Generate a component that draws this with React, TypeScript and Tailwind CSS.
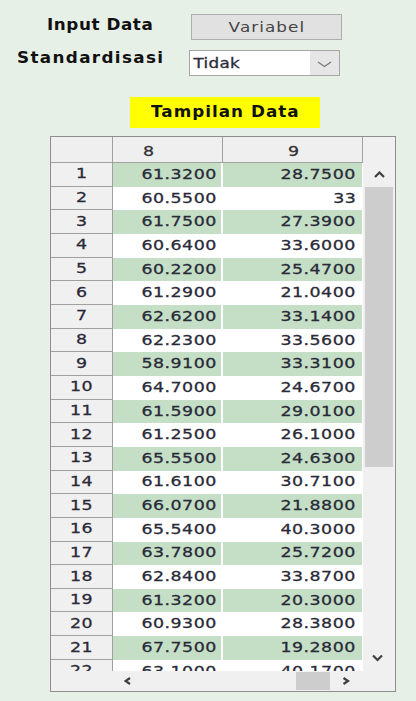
import React from 'react';

const rows: [string, string][] = [
  ['61.3200', '28.7500'],
  ['60.5500', '33'],
  ['61.7500', '27.3900'],
  ['60.6400', '33.6000'],
  ['60.2200', '25.4700'],
  ['61.2900', '21.0400'],
  ['62.6200', '33.1400'],
  ['62.2300', '33.5600'],
  ['58.9100', '33.3100'],
  ['64.7000', '24.6700'],
  ['61.5900', '29.0100'],
  ['61.2500', '26.1000'],
  ['65.5500', '24.6300'],
  ['61.6100', '30.7100'],
  ['66.0700', '21.8800'],
  ['65.5400', '40.3000'],
  ['63.7800', '25.7200'],
  ['62.8400', '33.8700'],
  ['61.3200', '20.3000'],
  ['60.9300', '28.3800'],
  ['67.7500', '19.2800'],
  ['63.1000', '40.1700'],
];

type Dir = 'up' | 'down' | 'left' | 'right';

// small scrollbar arrows
function Arrow({ dir }: { dir: Dir }) {
  const pts: Record<Dir, string> = {
    up: '1,6 5.5,1.5 10,6',
    down: '1,1.5 5.5,6 10,1.5',
    left: '6,1 1.5,4 6,7',
    right: '1.5,1 6,4 1.5,7',
  };
  const vertical = dir === 'up' || dir === 'down';
  return (
    <svg
      width={vertical ? 11 : 8}
      height={8}
      viewBox={vertical ? '0 0 11 8' : '0 0 8 8'}
      className="block"
    >
      <polyline points={pts[dir]} fill="none" stroke="#404040" strokeWidth="2.2" />
    </svg>
  );
}

export default function App() {
  return (
    <div className="w-[416px] h-[701px] overflow-hidden bg-[#e7f0e7] font-['DejaVu_Sans',sans-serif] text-[#222]">
      {/* Input Data */}
      <div className="flex items-start pt-[14px]">
        <div className="w-[191px] pl-[47px] pt-[2px] text-[15px] leading-[18px] font-bold text-[#111]">
          <span className="inline-block origin-left scale-x-[1.12] tracking-[0.5px]">Input Data</span>
        </div>
        <div className="w-[151px] h-[26px] border border-[#adadad] bg-[#e1e1e1] flex items-center justify-center text-[14px] text-[#444]">
          <span className="inline-block scale-x-[1.2] tracking-[0.9px]">Variabel</span>
        </div>
      </div>

      {/* Standardisasi */}
      <div className="flex items-start mt-[10px]">
        <div className="w-[189px] pl-[17px] -mt-[1px] text-[15px] leading-[18px] font-bold text-[#111]">
          <span className="inline-block origin-left scale-x-[1.12] tracking-[1.2px]">Standardisasi</span>
        </div>
        <div className="w-[151px] h-[26px] border border-[#a6a6a6] bg-white flex items-center">
          <span className="pl-[3px] inline-block origin-left scale-x-[1.2] tracking-[0.2px] text-[14px] text-[#2b2b3b] [-webkit-text-stroke:0.3px_#2b2b3b]">
            Tidak
          </span>
          <div className="ml-auto w-[29px] h-full bg-[#e6e6e6] flex items-center justify-center">
            <svg width="15" height="7" viewBox="0 0 15 7" className="block mt-[2px]">
              <polyline points="1,1 7.5,5.5 14,1" fill="none" stroke="#7a7a7a" strokeWidth="1.4" />
            </svg>
          </div>
        </div>
      </div>

      {/* Tampilan Data */}
      <div className="ml-[130px] mt-[21px] w-[190px] h-[31px] bg-[#ffff00] flex items-center justify-center text-[15px] font-bold text-[#111]">
        <span className="inline-block scale-x-[1.12] tracking-[0.9px]">Tampilan Data</span>
      </div>

      {/* table */}
      <div className="ml-[50px] mt-[8px] w-[346px] h-[556px] border border-[#8e8e8e] flex flex-col">
        <div className="flex h-[534px]">
          <div className="w-[312px] flex flex-col">
            <div className="flex h-[26px] border-b border-[#a0a0a0] bg-[#efefef] text-[14.5px] text-[#333] [-webkit-text-stroke:0.3px_#333]">
              <div className="w-[62px] border-r border-[#a0a0a0]" />
              <div className="w-[110px] border-r border-[#a0a0a0] pl-[31px] pt-[4px]">
                <span className="inline-block scale-x-[1.2]">8</span>
              </div>
              <div className="w-[140px] border-r border-[#a0a0a0] pl-[66px] pt-[4px]">
                <span className="inline-block scale-x-[1.2]">9</span>
              </div>
            </div>
            <div className="h-[508px] overflow-hidden">
              {rows.map(([a, b], i) => {
                const green = i % 2 === 0;
                return (
                  <div
                    key={i}
                    className="flex h-[23.67px] text-[14.5px] text-[#2a2a38] [-webkit-text-stroke:0.3px_#2a2a38]"
                  >
                    <div className="w-[62px] border-r border-b border-[#a0a0a0] bg-[#f0f0f0] flex items-center justify-center">
                      <span className="inline-block scale-x-[1.2] tracking-[0.4px]">{i + 1}</span>
                    </div>
                    <div
                      className={`w-[110px] border-r-2 border-white flex items-center justify-end pr-[4px] ${
                        green ? 'bg-[#c4dfc6]' : 'bg-white'
                      }`}
                    >
                      <span className="inline-block origin-right scale-x-[1.2] tracking-[0.4px]">{a}</span>
                    </div>
                    <div
                      className={`w-[140px] border-r border-white flex items-center justify-end pr-[6px] ${
                        green ? 'bg-[#c4dfc6]' : 'bg-white'
                      }`}
                    >
                      <span className="inline-block origin-right scale-x-[1.2] tracking-[0.4px]">{b}</span>
                    </div>
                  </div>
                );
              })}
            </div>
          </div>

          {/* vertical scrollbar */}
          <div className="w-[32px] bg-[#f0f0f0] flex flex-col">
            <div className="h-[26px]" />
            <div className="h-[24px] flex items-center justify-center">
              <Arrow dir="up" />
            </div>
            <div className="h-[280px] mx-[2px] bg-[#cdcdcd]" />
            <div className="flex-1" />
            <div className="h-[26px] flex items-center justify-center pr-[3px]">
              <Arrow dir="down" />
            </div>
          </div>
        </div>

        {/* horizontal scrollbar */}
        <div className="h-[20px] bg-[#f0f0f0] flex items-center">
          <div className="w-[73px]" />
          <Arrow dir="left" />
          <div className="w-[164px]" />
          <div className="w-[34px] h-[18px] bg-[#cdcdcd]" />
          <div className="w-[12px]" />
          <Arrow dir="right" />
        </div>
      </div>
    </div>
  );
}
